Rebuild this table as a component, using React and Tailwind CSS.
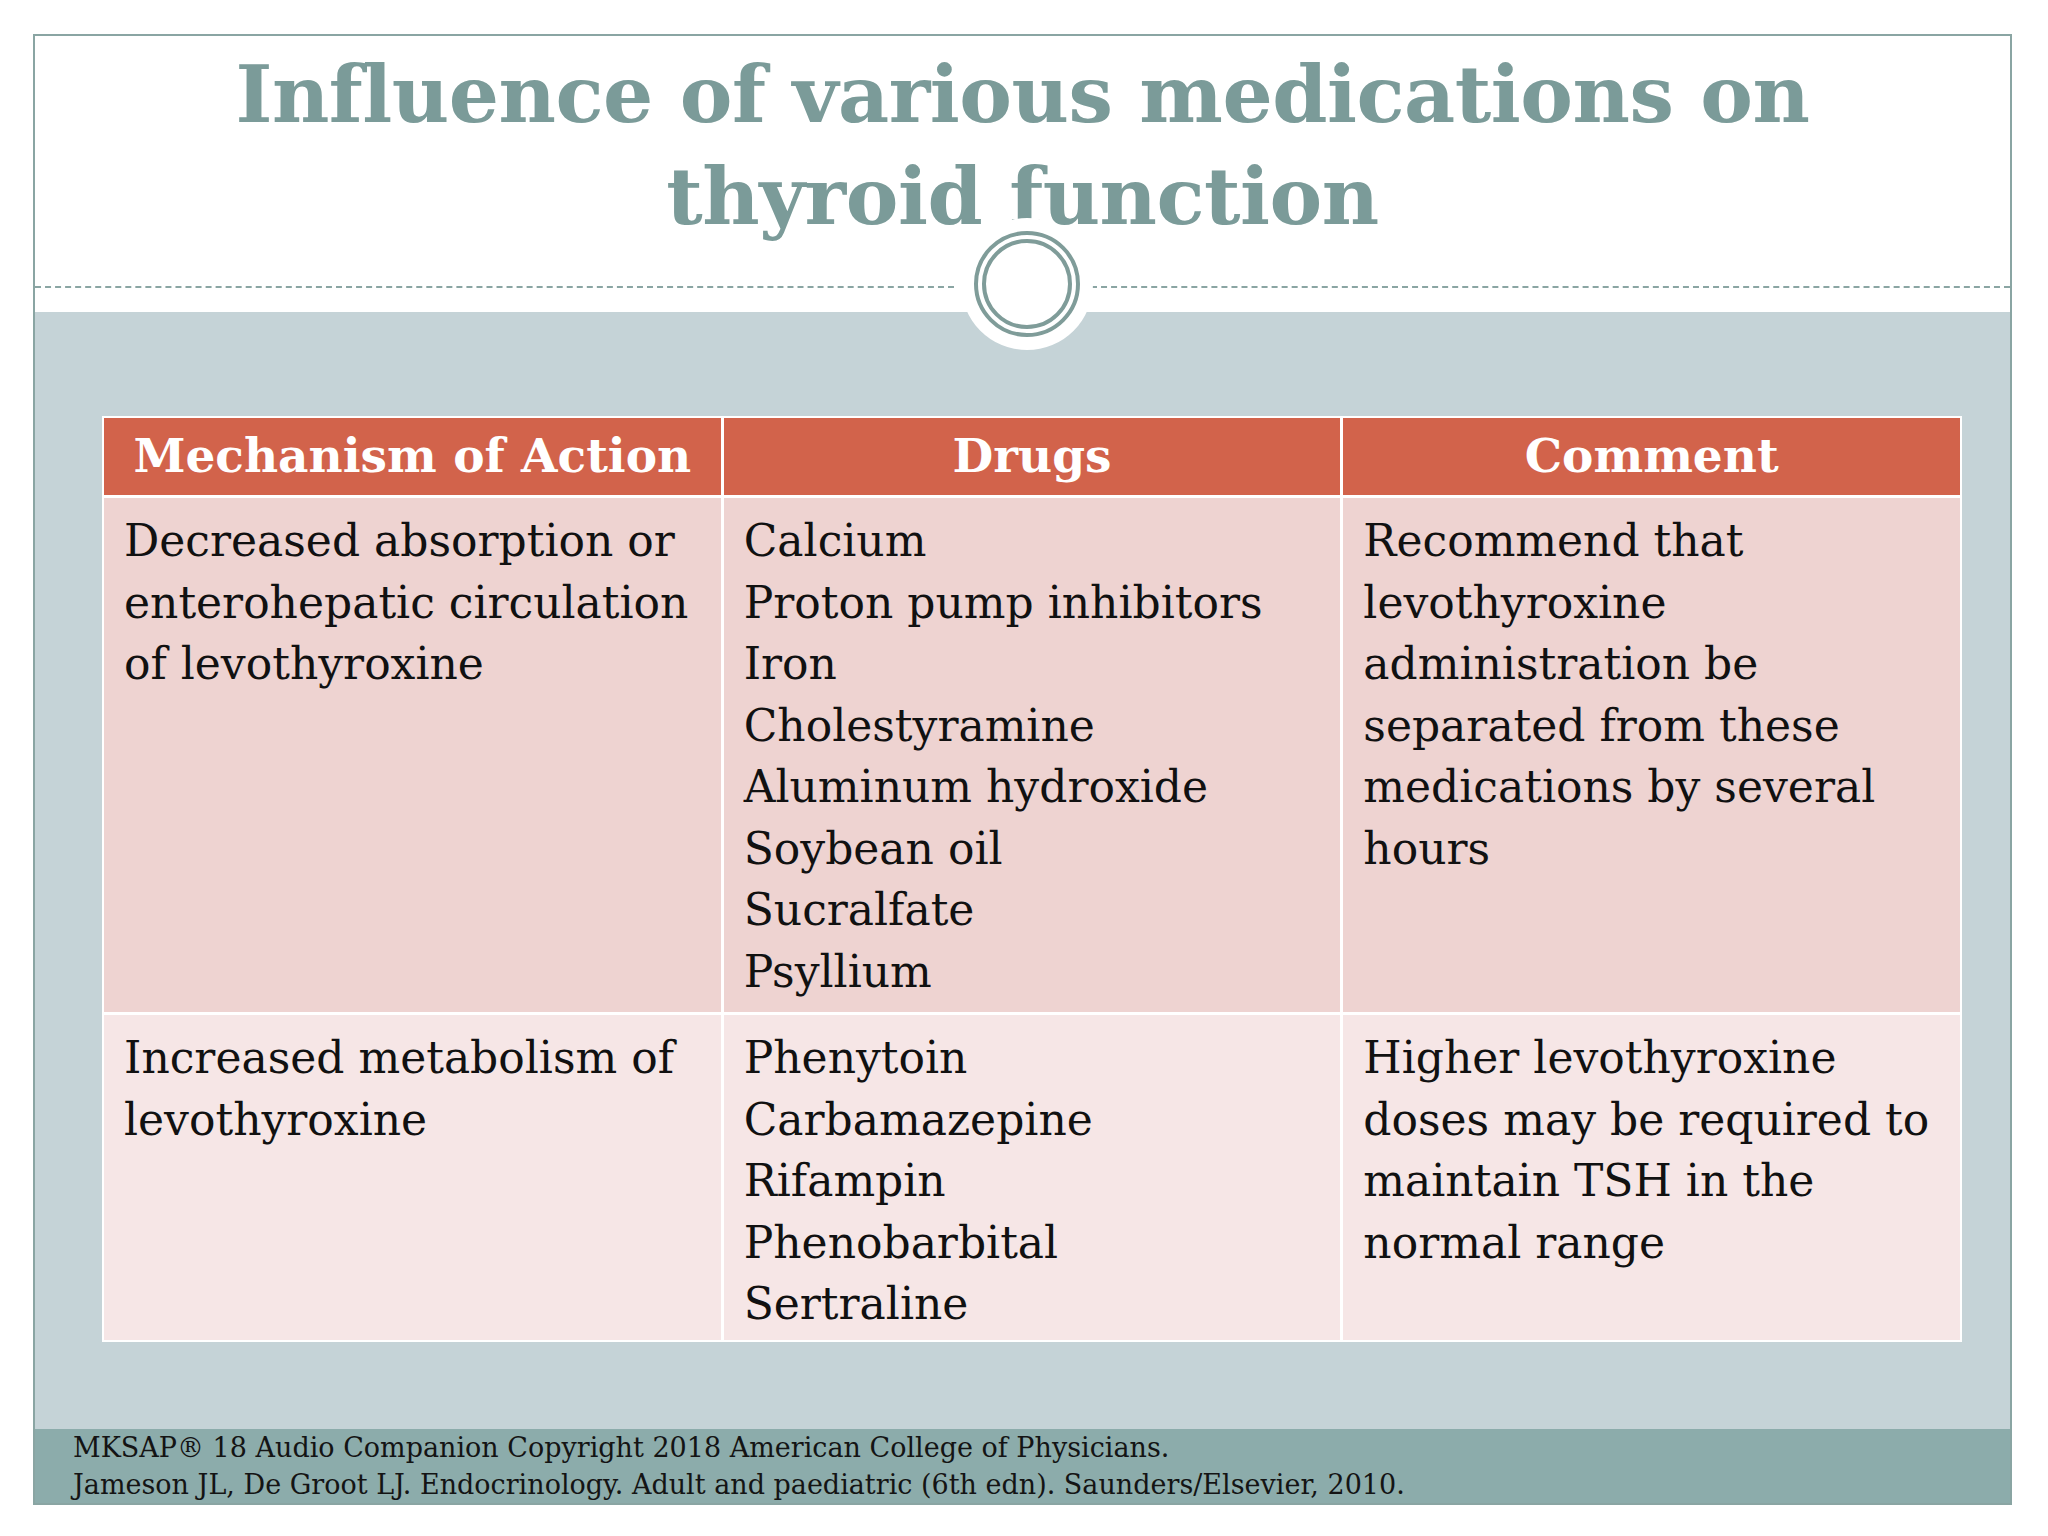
const rows = [
  {
    mechanism: 'Decreased absorption or enterohepatic circulation of levothyroxine',
    drugs: ['Calcium', 'Proton pump inhibitors', 'Iron', 'Cholestyramine', 'Aluminum hydroxide', 'Soybean oil', 'Sucralfate', 'Psyllium'],
    comment: 'Recommend that levothyroxine administration be separated from these medications by several hours',
    bg: 'bg-[#eed3d1]',
    h: 'h-[514px]',
  },
  {
    mechanism: 'Increased metabolism of levothyroxine',
    drugs: ['Phenytoin', 'Carbamazepine', 'Rifampin', 'Phenobarbital', 'Sertraline'],
    comment: 'Higher levothyroxine doses may be required to maintain TSH in the normal range',
    bg: 'bg-[#f6e6e6]',
    h: 'h-[325px]',
  },
];

const Ring = () => (
  <div className="absolute left-[926px] top-[182px] w-[132px] h-[132px] rounded-full bg-white flex items-center justify-center">
    <svg width="108" height="108" viewBox="0 0 108 108">
      <circle cx="54" cy="54" r="51" fill="none" stroke="#7f9c99" strokeWidth="4" />
      <circle cx="54" cy="54" r="43" fill="none" stroke="#7f9c99" strokeWidth="4" />
    </svg>
  </div>
);

export default function App() {
  return (
    <div className="w-[2048px] h-[1536px] bg-white pt-[34px] pl-[33px] font-['DejaVu_Serif',serif]">
      <div className="relative w-[1979px] h-[1471px] border-2 border-[#8aa5a3] flex flex-col">
        {/* title area */}
        <div className="h-[276px] bg-white flex flex-col">
          <h1 className="pt-[8px] text-center text-[79px] leading-[102px] font-bold text-[#7b9b99] tracking-[-0.5px]">
            Influence of various medications on
            <br />
            thyroid function
          </h1>
          <div className="mt-auto mb-[24px] flex items-center">
            <div className="flex-1 border-t-2 border-dashed border-[#8aa5a3]" />
            <div className="w-[137px]" />
            <div className="flex-1 border-t-2 border-dashed border-[#8aa5a3]" />
          </div>
        </div>

        {/* body */}
        <div className="flex-1 bg-[#c5d3d7] pt-[104px] px-[67px]">
          <div className="w-[1860px] bg-white border-2 border-white flex flex-col gap-[3px]">
            <div className="grid grid-cols-3 gap-[3px] h-[77px]">
              {['Mechanism of Action', 'Drugs', 'Comment'].map((t) => (
                <div key={t} className="bg-[#d2634b] flex items-center justify-center text-white font-bold text-[47px]">
                  {t}
                </div>
              ))}
            </div>
            {rows.map((r, i) => (
              <div key={i} className={`grid grid-cols-3 gap-[3px] ${r.h}`}>
                <div className={`${r.bg} pl-[20px] pr-[8px] pt-[12px] text-[44px] leading-[61.5px] text-[#111]`}>
                  {r.mechanism}
                </div>
                <div className={`${r.bg} pl-[20px] pr-[8px] pt-[12px] text-[44px] leading-[61.5px] text-[#111]`}>
                  {r.drugs.map((d) => (
                    <div key={d}>{d}</div>
                  ))}
                </div>
                <div className={`${r.bg} pl-[20px] pr-[8px] pt-[12px] text-[44px] leading-[61.5px] text-[#111]`}>
                  {r.comment}
                </div>
              </div>
            ))}
          </div>
        </div>

        {/* footer */}
        <div className="h-[74px] bg-[#8cacab] pl-[38px] flex flex-col justify-center text-[27px] leading-[37px] text-[#141414]">
          <div>MKSAP® 18 Audio Companion Copyright 2018 American College of Physicians.</div>
          <div>Jameson JL, De Groot LJ. Endocrinology. Adult and paediatric (6th edn). Saunders/Elsevier, 2010.</div>
        </div>

        <Ring />
      </div>
    </div>
  );
}
